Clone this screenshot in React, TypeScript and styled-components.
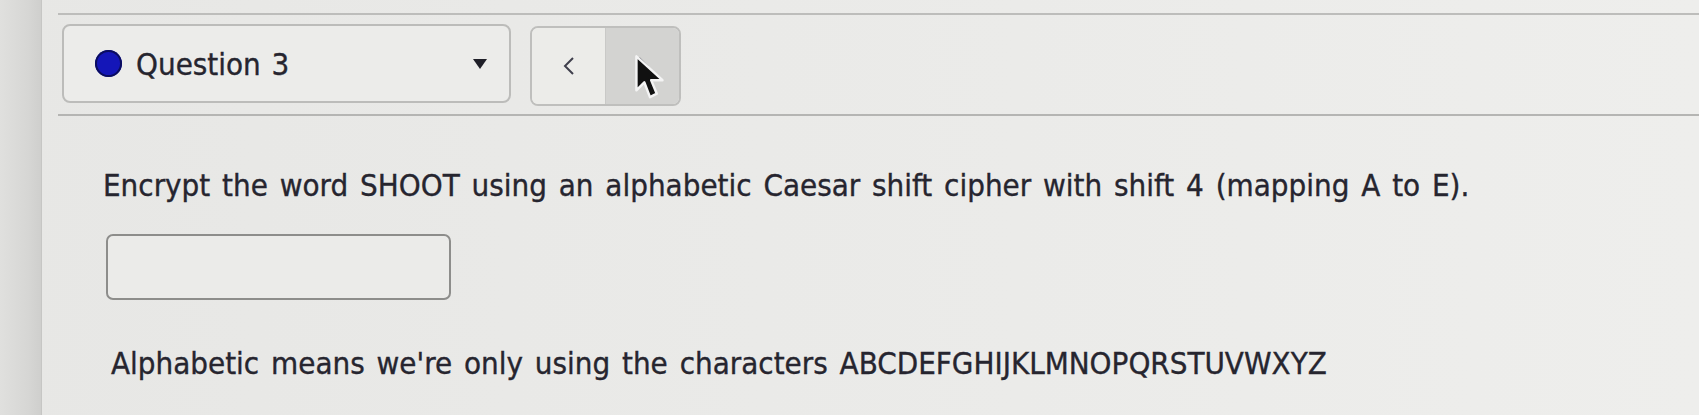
import React from "react";
import styled, { createGlobalStyle } from "styled-components";

const GlobalStyle = createGlobalStyle`
  html, body {
    margin: 0;
    padding: 0;
    background: #e9e9e7;
  }
  body {
    font-family: "DejaVu Sans Condensed", "DejaVu Sans", Verdana, sans-serif;
    font-stretch: condensed;
    color: #26252f;
  }
`;

const Page = styled.div`
  display: flex;
  width: 1699px;
  height: 415px;
  overflow: hidden;
  background: linear-gradient(to right, #e7e7e5, #ebebe9 60%, #eeeeec);
`;

const SideStrip = styled.div`
  width: 41px;
  flex: none;
  background: linear-gradient(to right, #e0e0de, #d6d6d4 70%, #cfcfcd);
  border-right: 1px solid #c6c6c4;
`;

const Main = styled.div`
  flex: 1;
  display: flex;
  flex-direction: column;
  padding-top: 13px;
`;

const Header = styled.div`
  margin-left: 16px;
  border-top: 2px solid #bdbdbb;
  border-bottom: 2px solid #b5b5b3;
  padding: 9px 0 8px 4px;
  display: flex;
  align-items: flex-start;
  gap: 19px;
`;

const QuestionSelect = styled.div`
  width: 449px;
  height: 79px;
  box-sizing: border-box;
  border: 2px solid #bcbcba;
  border-radius: 8px;
  background: #ececea;
  display: flex;
  align-items: center;
  padding: 0 22px 0 31px;
`;

const StatusDot = styled.span`
  width: 27px;
  height: 27px;
  border-radius: 50%;
  background: #1416b8;
  box-shadow: inset 0 0 0 2px #0b0d5e;
  flex: none;
`;

const SelectLabel = styled.span`
  margin-left: 14px;
  font-size: 31px;
  line-height: 36px;
  word-spacing: 2px;
  -webkit-text-stroke: 0.35px #26252f;
  flex: 1;
`;

const Caret = styled.span`
  width: 0;
  height: 0;
  border-left: 7px solid transparent;
  border-right: 7px solid transparent;
  border-top: 10px solid #1f1f28;
`;

const NavGroup = styled.div`
  position: relative;
  margin-top: 2px;
  width: 151px;
  height: 80px;
  box-sizing: border-box;
  border: 2px solid #bfbfbd;
  border-radius: 8px;
  overflow: hidden;
  display: flex;
`;

const NavButton = styled.div<{ $hover?: boolean }>`
  flex: 1;
  display: flex;
  align-items: center;
  justify-content: center;
  background: ${(p) => (p.$hover ? "#d3d3d1" : "#ecece9")};
  border-left: ${(p) => (p.$hover ? "1px solid #c9c9c7" : "none")};
`;

const Pointer = styled.svg`
  position: absolute;
  left: 101px;
  top: 26px;
`;

const Content = styled.div`
  padding: 51px 0 0 61px;
  display: flex;
  flex-direction: column;
  align-items: flex-start;
`;

const Prompt = styled.p<{ $shift?: number }>`
  margin: 0 0 0 ${(p) => p.$shift || 0}px;
  font-size: 31px;
  line-height: 36px;
  word-spacing: 3px;
  -webkit-text-stroke: 0.35px #26252f;
  white-space: nowrap;
`;

const AnswerBox = styled.input`
  margin: 31px 0 45px 3px;
  width: 345px;
  height: 66px;
  box-sizing: border-box;
  border: 2px solid #8d8d8b;
  border-radius: 7px;
  background: #ebebe9;
  outline: none;
  font-size: 28px;
  font-family: inherit;
`;

const Chevron: React.FC<{ dir: "left" | "right" }> = ({ dir }) => (
  <svg width="14" height="22" viewBox="0 0 14 22">
    <path
      d={dir === "left" ? "M11 3 L3 11 L11 19" : "M3 3 L11 11 L3 19"}
      fill="none"
      stroke="#3f3f4c"
      strokeWidth="2"
    />
  </svg>
);

export default function App() {
  return (
    <Page>
      <GlobalStyle />
      <SideStrip />
      <Main>
        <Header>
          <QuestionSelect>
            <StatusDot />
            <SelectLabel>Question 3</SelectLabel>
            <Caret />
          </QuestionSelect>
          <NavGroup>
            <NavButton>
              <Chevron dir="left" />
            </NavButton>
            <NavButton $hover>
              <Chevron dir="right" />
            </NavButton>
            {/* mouse pointer over the next button */}
            <Pointer width="34" height="50" viewBox="0 0 30 44">
              <path
                d="M3 2 L3 32 L10 25 L15 38 L21 35 L16 23 L26 23 Z"
                fill="#111"
                stroke="#f4f4f4"
                strokeWidth="2.2"
                strokeLinejoin="round"
              />
            </Pointer>
          </NavGroup>
        </Header>
        <Content>
          <Prompt>
            Encrypt the word SHOOT using an alphabetic Caesar shift cipher with
            shift 4 (mapping A to E).
          </Prompt>
          <AnswerBox type="text" aria-label="answer" />
          <Prompt $shift={8}>
            Alphabetic means we're only using the characters
            ABCDEFGHIJKLMNOPQRSTUVWXYZ
          </Prompt>
        </Content>
      </Main>
    </Page>
  );
}
